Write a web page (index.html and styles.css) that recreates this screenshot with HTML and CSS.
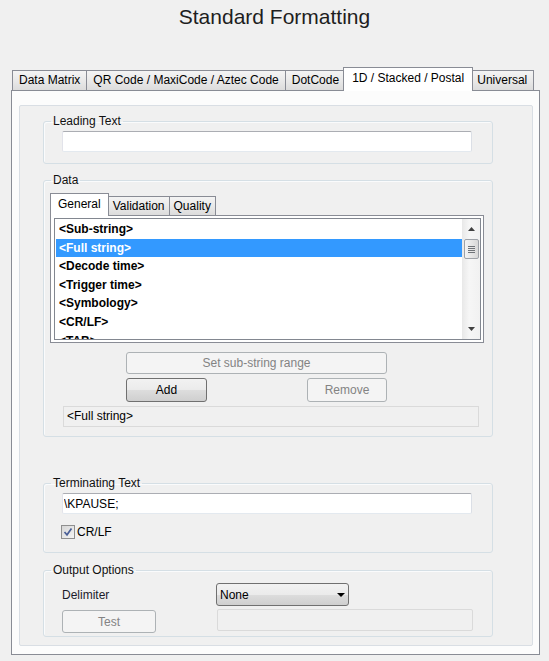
FILE: index.html
```html
<!DOCTYPE html>
<html lang="en">
<head>
  <meta charset="UTF-8">
  <title>Standard Formatting</title>
  <link rel="stylesheet" href="styles.css">
</head>
<body>
  <h1 class="title">Standard Formatting</h1>

  <div class="tabs">
    <div class="tab">Data Matrix</div>
    <div class="tab">QR Code / MaxiCode / Aztec Code</div>
    <div class="tab">DotCode</div>
    <div class="tab active">1D / Stacked / Postal</div>
    <div class="tab">Universal</div>
  </div>

  <div class="tab-panel">
    <div class="frame">
      <!-- Leading Text -->
      <fieldset class="group leading">
        <legend>Leading Text</legend>
        <input class="textbox" type="text">
      </fieldset>

      <!-- Data -->
      <fieldset class="group data">
        <legend>Data</legend>
        <div class="subtabs">
          <div class="subtab active">General</div>
          <div class="subtab">Validation</div>
          <div class="subtab">Quality</div>
        </div>
        <div class="subpanel">
          <div class="listbox">
            <ul class="list">
              <li>&lt;Sub-string&gt;</li>
              <li class="selected">&lt;Full string&gt;</li>
              <li>&lt;Decode time&gt;</li>
              <li>&lt;Trigger time&gt;</li>
              <li>&lt;Symbology&gt;</li>
              <li>&lt;CR/LF&gt;</li>
              <li>&lt;TAB&gt;</li>
            </ul>
            <div class="scrollbar">
              <div class="sb-btn">
                <svg width="7" height="4" viewBox="0 0 7 4"><path d="M0 4 L3.5 0 L7 4 Z" fill="#404040"/></svg>
              </div>
              <div class="sb-thumb">
                <svg width="7" height="8" viewBox="0 0 7 8">
                  <path d="M0 1.5 H7 M0 3.5 H7 M0 5.5 H7 M0 7.5 H7" stroke="#6f7378" stroke-width="1"/>
                </svg>
              </div>
              <div class="sb-track"></div>
              <div class="sb-btn">
                <svg width="7" height="4" viewBox="0 0 7 4"><path d="M0 0 L3.5 4 L7 0 Z" fill="#404040"/></svg>
              </div>
            </div>
          </div>
        </div>
        <button class="btn btn-range" disabled>Set sub-string range</button>
        <div class="btn-row">
          <button class="btn btn-add">Add</button>
          <button class="btn btn-remove" disabled>Remove</button>
        </div>
        <div class="readonly-box">&lt;Full string&gt;</div>
      </fieldset>

      <!-- Terminating Text -->
      <fieldset class="group terminating">
        <legend>Terminating Text</legend>
        <input class="textbox" type="text" value="\KPAUSE;">
        <label class="check-row">
          <span class="check">
            <svg width="10" height="10" viewBox="0 0 10 10"><path d="M1.5 5 L4 7.8 L8.5 1.5" fill="none" stroke="#4a5f97" stroke-width="1.7"/></svg>
          </span>
          CR/LF
        </label>
      </fieldset>

      <!-- Output Options -->
      <fieldset class="group output">
        <legend>Output Options</legend>
        <div class="option-row">
          <span class="option-label">Delimiter</span>
          <div class="combo">
            <span>None</span>
            <svg width="8" height="4" viewBox="0 0 8 4"><path d="M0 0 L4 4 L8 0 Z" fill="#000"/></svg>
          </div>
        </div>
        <div class="test-row">
          <button class="btn btn-test" disabled>Test</button>
          <div class="disabled-field"></div>
        </div>
      </fieldset>
    </div>
  </div>
</body>
</html>
```

FILE: styles.css
```css
body {
  margin: 0;
  background: #f0f0f0;
  color: #000;
  font-family: "Liberation Sans", Arial, sans-serif;
  font-size: 12px;
}

.title {
  margin: 0;
  padding: 5px 0 38px;
  font-size: 21px;
  line-height: 24px;
  font-weight: normal;
  text-align: center;
  color: #1e1e1e;
}

/* top tab strip */
.tabs {
  display: flex;
  align-items: flex-end;
  height: 24px;
  margin: 0 0 -1px 12px;
  position: relative;
  z-index: 1;
}

.tab {
  height: 19px;
  line-height: 19px;
  padding: 0 6px;
  margin: 0 0 1px -1px;
  border: 1px solid #898c95;
  border-bottom: 0;
  background: linear-gradient(#f4f4f4, #e9e9e9 50%, #dcdcdc);
  white-space: nowrap;
}

.tab:first-child {
  margin-left: 0;
}

.tab.active {
  height: 23px;
  line-height: 21px;
  padding: 0 8px;
  margin: 0 -2px 0 -3px;
  background: #fff;
  position: relative;
  z-index: 2;
}

.tab-panel {
  margin: 0 9px 0 11px;
  padding: 14px 6px 8px 7px;
  border: 1px solid #898c95;
  background: #fcfcfc;
}

.frame {
  padding: 8px 0 8px 23px;
  border: 1px solid #d9dee4;
  border-radius: 2px;
  background: #f0f0f0;
}

/* group boxes */
.group {
  width: 450px;
  box-sizing: border-box;
  min-inline-size: 0;
  margin: 0;
  padding: 0;
  border: 1px solid #d5dfe5;
  border-radius: 3px;
  box-shadow: inset 1px 1px 0 #fafbfc;
}

.group legend {
  margin-left: 7px;
  padding: 0 2px;
  line-height: 14px;
  color: #111;
}

.leading {
  padding-bottom: 11px;
}

.data {
  margin-top: 9px;
  padding-bottom: 9px;
}

.terminating {
  margin-top: 39px;
  padding-bottom: 13px;
}

.output {
  margin-top: 10px;
  padding-bottom: 3px;
}

.textbox {
  display: block;
  width: 410px;
  height: 21px;
  box-sizing: border-box;
  margin: 3px 0 0 18px;
  padding: 0 1px;
  border: 1px solid;
  border-color: #abadb3 #dbdfe6 #e3e9ef #e2e3ea;
  border-radius: 2px;
  background: #fff;
  font: inherit;
  color: #000;
  outline: none;
}

/* Data: inner tabs + list */
.subtabs {
  display: flex;
  align-items: flex-end;
  height: 23px;
  margin: 6px 0 -1px 6px;
  position: relative;
  z-index: 1;
}

.subtab {
  height: 18px;
  line-height: 18px;
  padding: 0 4px;
  margin: 0 0 1px -1px;
  border: 1px solid #898c95;
  border-bottom: 0;
  background: linear-gradient(#f4f4f4, #e9e9e9 50%, #dcdcdc);
}

.subtab.active {
  height: 22px;
  line-height: 20px;
  padding: 0 7px;
  margin: 0;
  background: #fff;
  position: relative;
  z-index: 2;
}

.subpanel {
  width: 434px;
  height: 128px;
  box-sizing: border-box;
  margin-left: 6px;
  padding: 2px 2px 2px 3px;
  border: 1px solid #898c95;
  background: #fff;
}

.listbox {
  display: flex;
  height: 100%;
  box-sizing: border-box;
  border: 1px solid #828790;
  background: #fff;
}

.list {
  flex: 1;
  margin: 0;
  padding: 1px 0 0 1px;
  list-style: none;
  overflow: hidden;
}

.list li {
  line-height: 18.6px;
  padding-left: 3px;
  font-weight: bold;
  white-space: nowrap;
}

.list li.selected {
  background: #3399ff;
  color: #fff;
}

.scrollbar {
  display: flex;
  flex-direction: column;
  align-items: center;
  width: 18px;
  background: linear-gradient(90deg, #e8e8e8, #f6f6f6 40%, #f1f1f1);
}

.sb-btn {
  display: flex;
  align-items: center;
  justify-content: center;
  height: 20px;
  width: 100%;
}

.sb-thumb {
  display: flex;
  align-items: center;
  justify-content: center;
  width: 15px;
  height: 20px;
  box-sizing: border-box;
  border: 1px solid #9ea2a8;
  border-radius: 2px;
  background: linear-gradient(90deg, #f4f4f4, #e6e6e6 50%, #d8d8d8);
}

.sb-track {
  flex: 1;
}

/* buttons */
.btn {
  display: block;
  height: 22px;
  box-sizing: border-box;
  padding: 0;
  border: 1px solid #707070;
  border-radius: 3px;
  background: linear-gradient(#f2f2f2, #ebebeb 50%, #dddddd 51%, #cfcfcf);
  font: inherit;
  color: #000;
}

.btn:disabled {
  border-color: #adb2b5;
  background: #f4f4f4;
  color: #838383;
}

.btn-range {
  width: 261px;
  margin: 9px 0 0 82px;
}

.btn-row {
  display: flex;
  justify-content: space-between;
  width: 261px;
  margin: 4px 0 0 82px;
}

.btn-add {
  width: 81px;
  height: 24px;
}

.btn-remove {
  width: 80px;
  height: 24px;
}

.readonly-box {
  width: 416px;
  height: 21px;
  box-sizing: border-box;
  margin: 4px 0 0 19px;
  padding-left: 3px;
  border: 1px solid #dadada;
  background: #f0f0f0;
  line-height: 19px;
}

/* Terminating: checkbox */
.check-row {
  display: flex;
  align-items: center;
  gap: 2px;
  height: 14px;
  margin: 11px 0 0 17px;
}

.check {
  display: flex;
  align-items: center;
  justify-content: center;
  width: 14px;
  height: 14px;
  box-sizing: border-box;
  border: 1px solid #8f8f8f;
  background: linear-gradient(135deg, #d6d6d6, #f4f4f4);
}

/* Output options */
.option-row {
  display: flex;
  align-items: center;
  margin: 6px 0 0 18px;
}

.option-label {
  width: 154px;
  color: #1a1a2a;
}

.combo {
  display: flex;
  align-items: center;
  justify-content: space-between;
  width: 133px;
  height: 23px;
  box-sizing: border-box;
  padding: 0 3px 0 3px;
  border: 1px solid #707070;
  border-radius: 3px;
  background: linear-gradient(#f2f2f2, #ebebeb 50%, #dddddd 51%, #cfcfcf);
}

.test-row {
  display: flex;
  align-items: flex-start;
  margin: 4px 0 0 18px;
}

.btn-test {
  width: 94px;
  height: 23px;
}

.disabled-field {
  width: 256px;
  height: 22px;
  box-sizing: border-box;
  margin: -1px 0 0 61px;
  border: 1px solid #dadada;
  border-radius: 2px;
  background: #f0f0f0;
}
```
